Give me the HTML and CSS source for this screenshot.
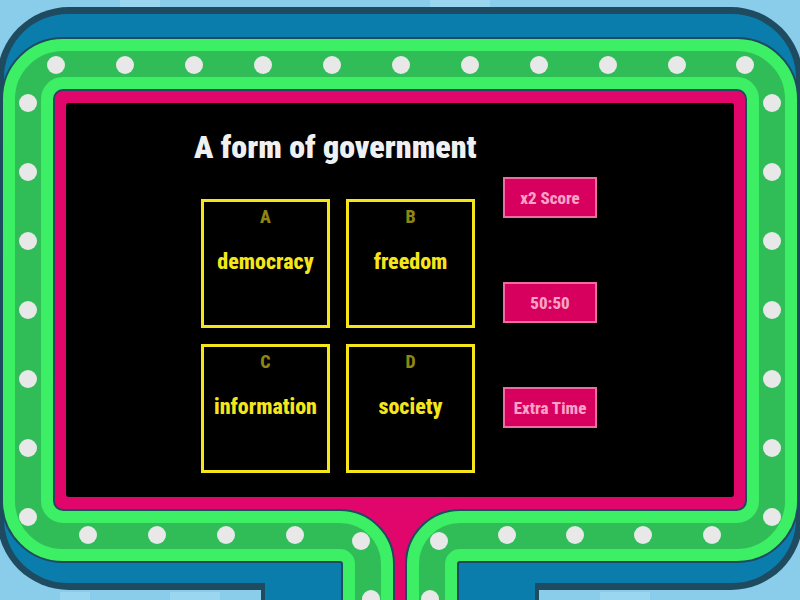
FILE: index.html
```html
<!DOCTYPE html>
<html lang="en">
<head>
<meta charset="utf-8">
<title>Quiz</title>
<link rel="stylesheet" href="styles.css">
</head>
<body>
<div class="stage">
  <svg class="frame" width="800" height="600" viewBox="0 0 800 600" aria-hidden="true">
    <defs>
      <path id="band" d="M368 640 L368 564 A28 28 0 0 0 340 536 L63 536 A35 35 0 0 1 28 501 L28 99 A35 35 0 0 1 63 64 L737 64 A35 35 0 0 1 772 99 L772 501 A35 35 0 0 1 737 536 L460 536 A28 28 0 0 0 432 564 L432 640"/>
    </defs>
    <rect x="0" y="0" width="800" height="600" fill="#8acdeb"/>
    <rect x="120" y="0" width="40" height="7" fill="#9ad6f0"/>
    <rect x="430" y="0" width="60" height="7" fill="#9ad6f0"/>
    <rect x="60" y="592" width="30" height="8" fill="#9ad6f0"/>
    <rect x="170" y="592" width="50" height="8" fill="#9ad6f0"/>
    <rect x="600" y="592" width="50" height="8" fill="#9ad6f0"/>
    <!-- outer dark edge -->
    <rect x="-3" y="7" width="806" height="583" rx="72" fill="#1e4b60"/>
    <rect x="261" y="500" width="278" height="110" fill="#1e4b60"/>
    <!-- blue band -->
    <rect x="4" y="14" width="792" height="569" rx="64" fill="#0b7dac"/>
    <rect x="265" y="500" width="270" height="110" fill="#0b7dac"/>
    <!-- magenta screen surround -->
    <path d="M40 75 H760 V525 H420 V610 H380 V525 H40 Z" fill="#e0066c"/>
    <!-- green band -->
    <g fill="none" stroke-linejoin="round">
      <use href="#band" stroke="#1e4b60" stroke-width="54"/>
      <use href="#band" stroke="#3cef64" stroke-width="50"/>
      <use href="#band" stroke="#30bd58" stroke-width="26"/>
    </g>
    <!-- bulbs -->
    <g fill="#e8e8e8">
      <circle cx="56" cy="65" r="9"/><circle cx="125" cy="65" r="9"/><circle cx="194" cy="65" r="9"/>
      <circle cx="263" cy="65" r="9"/><circle cx="332" cy="65" r="9"/><circle cx="401" cy="65" r="9"/>
      <circle cx="470" cy="65" r="9"/><circle cx="539" cy="65" r="9"/><circle cx="608" cy="65" r="9"/>
      <circle cx="677" cy="65" r="9"/><circle cx="745" cy="65" r="9"/>
      <circle cx="28" cy="103" r="9"/><circle cx="28" cy="172" r="9"/><circle cx="28" cy="241" r="9"/>
      <circle cx="28" cy="310" r="9"/><circle cx="28" cy="379" r="9"/><circle cx="28" cy="448" r="9"/>
      <circle cx="28" cy="517" r="9"/>
      <circle cx="772" cy="103" r="9"/><circle cx="772" cy="172" r="9"/><circle cx="772" cy="241" r="9"/>
      <circle cx="772" cy="310" r="9"/><circle cx="772" cy="379" r="9"/><circle cx="772" cy="448" r="9"/>
      <circle cx="772" cy="517" r="9"/>
      <circle cx="88" cy="535" r="9"/><circle cx="157" cy="535" r="9"/><circle cx="226" cy="535" r="9"/>
      <circle cx="295" cy="535" r="9"/><circle cx="361" cy="541" r="9"/>
      <circle cx="439" cy="541" r="9"/><circle cx="507" cy="535" r="9"/><circle cx="575" cy="535" r="9"/>
      <circle cx="643" cy="535" r="9"/><circle cx="712" cy="535" r="9"/>
      <circle cx="371" cy="599" r="9"/><circle cx="430" cy="599" r="9"/>
    </g>
  </svg>

  <div class="screen">
    <h1 class="question">A form of government</h1>
    <div class="main">
      <div class="answers">
        <div class="answer"><span class="letter">A</span><span class="text">democracy</span></div>
        <div class="answer"><span class="letter">B</span><span class="text">freedom</span></div>
        <div class="answer"><span class="letter">C</span><span class="text">information</span></div>
        <div class="answer"><span class="letter">D</span><span class="text">society</span></div>
      </div>
      <div class="powerups">
        <div class="power">x2 Score</div>
        <div class="power">50:50</div>
        <div class="power">Extra Time</div>
      </div>
    </div>
  </div>
</div>
</body>
</html>
```

FILE: styles.css
```css
* {
  box-sizing: border-box;
}

html, body {
  margin: 0;
  padding: 0;
}

body {
  font-family: Roboto, "Liberation Sans Narrow", "Liberation Sans", sans-serif;
  font-stretch: 78%;
  font-weight: 800;
}

.stage {
  position: relative;
  width: 800px;
  height: 600px;
  overflow: hidden;
  padding: 103px 0 0 66px;
}

.frame {
  position: absolute;
  left: 0;
  top: 0;
  display: block;
}

.screen {
  position: relative;
  width: 668px;
  height: 394px;
  background: #000;
  border-radius: 3px;
  padding-top: 24px;
}

.question {
  margin: 0 0 0 128px;
  font-size: 32px;
  line-height: 40px;
  font-weight: 900;
  font-stretch: 77%;
  color: #f0f0f0;
}

.main {
  display: flex;
  align-items: flex-start;
  margin: 10px 0 0 135px;
}

.answers {
  display: grid;
  grid-template-columns: 129px 129px;
  grid-auto-rows: 129px;
  gap: 16px;
  margin-top: 22px;
}

.answer {
  border: 3px solid #f5e61b;
  display: flex;
  flex-direction: column;
  align-items: center;
  padding-top: 5px;
}

.letter {
  font-size: 18px;
  line-height: 20px;
  color: #8e8612;
}

.text {
  margin-top: 23px;
  font-size: 22px;
  line-height: 24px;
  color: #f5e61b;
  white-space: nowrap;
}

.powerups {
  display: flex;
  flex-direction: column;
  gap: 64px;
  margin-left: 28px;
}

.power {
  width: 94px;
  height: 41px;
  border: 2px solid #f06ba2;
  background: #d8005f;
  color: #f7a3c6;
  font-size: 17px;
  font-stretch: 82%;
  display: flex;
  align-items: center;
  justify-content: center;
  white-space: nowrap;
}
```
